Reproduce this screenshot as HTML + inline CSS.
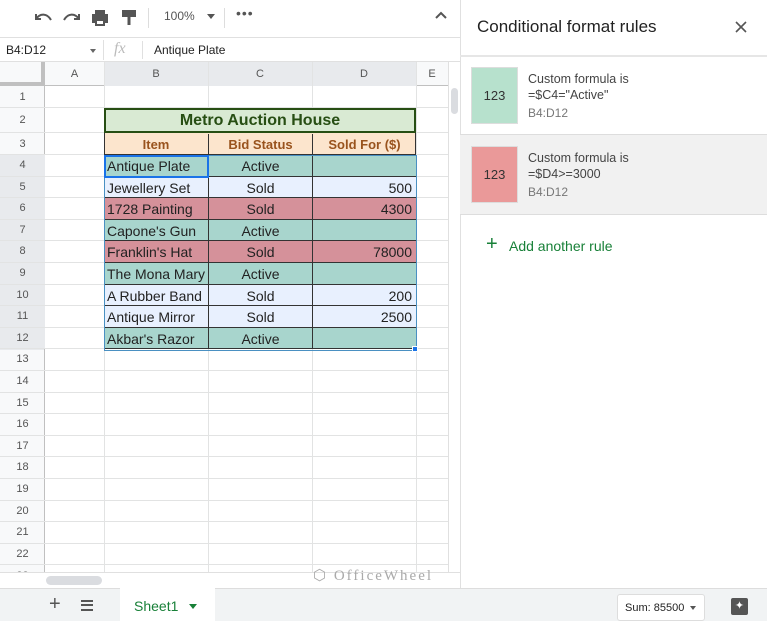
<!DOCTYPE html><html><head><meta charset="utf-8"><style>
*{margin:0;padding:0;box-sizing:border-box}
body{width:767px;height:621px;position:relative;overflow:hidden;background:#fff;font-family:"Liberation Sans",Arial,sans-serif;color:#222}
.a{position:absolute}
.hl{position:absolute;height:1px;background:#e2e3e3}
.vl{position:absolute;width:1px;background:#e2e3e3}
.rn{position:absolute;left:0;width:45px;text-align:center;font-size:11px;color:#555;background:#f8f9fa}
.c{position:absolute;font-size:14px;line-height:22px;white-space:nowrap;overflow:hidden}
</style></head><body>
<!-- toolbar -->
<div class="a" style="left:0;top:0;width:460px;height:38px;background:#fff;border-bottom:1px solid #e0e0e0"></div>
<svg class="a" style="left:30px;top:6px" width="120" height="24" viewBox="0 0 120 24" fill="none" stroke="#555" stroke-width="2">
<path d="M6 8 L6 13 L11 13"/><path d="M6 13 C10 7 17 7 21 14"/>
<path d="M49 8 L49 13 L44 13"/><path d="M49 13 C45 7 38 7 34 14"/>
<rect x="63" y="9" width="14" height="7" fill="#555"/><rect x="66" y="5" width="8" height="4" fill="#555"/><rect x="66" y="14" width="8" height="5" fill="#fff"/>
<rect x="93" y="5" width="12" height="5" fill="#555"/><path d="M99 10 L99 19" stroke-width="3"/>
</svg>
<div class="a" style="left:148px;top:8px;width:1px;height:20px;background:#ddd"></div>
<div class="a" style="left:164px;top:9px;font-size:12px;color:#555">100%</div>
<div class="a" style="left:207px;top:14px;border:4px solid transparent;border-top:5px solid #555"></div>
<div class="a" style="left:224px;top:8px;width:1px;height:20px;background:#ddd"></div>
<div class="a" style="left:236px;top:5px;font-size:14px;color:#555;letter-spacing:1px">•••</div>
<svg class="a" style="left:434px;top:10px" width="14" height="10"><path d="M2 8 L7 3 L12 8" stroke="#555" stroke-width="2" fill="none"/></svg>
<!-- formula bar -->
<div class="a" style="left:0;top:38px;width:460px;height:24px;border-bottom:1px solid #e0e0e0"></div>
<div class="a" style="left:6px;top:43px;font-size:12px">B4:D12</div>
<div class="a" style="left:90px;top:49px;border:3px solid transparent;border-top:4px solid #666"></div>
<div class="a" style="left:103px;top:40px;width:1px;height:20px;background:#e0e0e0"></div>
<div class="a" style="left:114px;top:40px;font-size:16px;font-style:italic;color:#bbb;font-family:'Liberation Serif',serif">fx</div>
<div class="a" style="left:142px;top:41px;width:1px;height:18px;background:#e0e0e0"></div>
<div class="a" style="left:154px;top:43px;font-size:12px">Antique Plate</div>
<!-- headers -->
<div class="a" style="left:0;top:62px;width:448px;height:24px;background:#f8f9fa;border-bottom:1px solid #c0c0c0"></div>
<div class="a" style="left:104px;top:62px;width:312px;height:24px;background:#e8eaed"></div>
<div class="a" style="left:0;top:62px;width:45px;height:24px;background:#f8f9fa;border-right:4px solid #c0c0c0;border-bottom:4px solid #c0c0c0"></div>
<div class="a" style="left:45px;top:68px;width:59px;text-align:center;font-size:11px;color:#555">A</div>
<div class="a" style="left:104px;top:68px;width:104px;text-align:center;font-size:11px;color:#555">B</div>
<div class="a" style="left:208px;top:68px;width:104px;text-align:center;font-size:11px;color:#555">C</div>
<div class="a" style="left:312px;top:68px;width:104px;text-align:center;font-size:11px;color:#555">D</div>
<div class="a" style="left:416px;top:68px;width:32px;text-align:center;font-size:11px;color:#555">E</div>
<div class="vl" style="left:104px;top:62px;height:510px;background:#e2e3e3"></div>
<div class="vl" style="left:208px;top:62px;height:510px"></div>
<div class="vl" style="left:312px;top:62px;height:510px"></div>
<div class="vl" style="left:416px;top:62px;height:510px"></div>
<div class="a" style="left:0;top:86px;width:45px;height:486px;background:#f8f9fa;border-right:1px solid #c0c0c0"></div>
<div class="a" style="left:0;top:155px;width:45px;height:195px;background:#e8eaed;border-right:1px solid #c0c0c0"></div>
<div id="rows"></div>
<!-- table -->
<div class="a" style="left:104px;top:108px;width:312px;height:25px;background:#d9ead3;border:2px solid #274e13;text-align:center;font-weight:bold;font-size:16px;line-height:21px;color:#274e13">Metro Auction House</div>
<div class="a" style="left:104px;top:133px;width:312px;height:22px;background:#fce5cd;border:1px solid #333;border-top:none"></div>
<div class="c" style="left:104px;top:134px;width:104px;text-align:center;color:#99531d;font-weight:bold;font-size:13px">Item</div>
<div class="c" style="left:208px;top:134px;width:104px;text-align:center;color:#99531d;font-weight:bold;font-size:13px;border-left:1px solid #333">Bid Status</div>
<div class="c" style="left:312px;top:134px;width:104px;text-align:center;color:#99531d;font-weight:bold;font-size:13px;border-left:1px solid #333">Sold For ($)</div>
<div id="data"></div>
<div class="a" style="left:104px;top:155px;width:313px;height:196px;border:1px solid #4a90c2"></div>
<div class="a" style="left:104px;top:155px;width:105px;height:23px;border:2px solid #1a73e8"></div>
<div class="a" style="left:412px;top:346px;width:6px;height:6px;background:#1a73e8;border:1px solid #fff"></div>
<!-- scrollbars -->
<div class="a" style="left:448px;top:62px;width:12px;height:510px;background:#fff;border-left:1px solid #e0e0e0"></div>
<div class="a" style="left:451px;top:88px;width:7px;height:26px;background:#dadce0;border-radius:4px"></div>
<div class="a" style="left:0;top:572px;width:460px;height:16px;background:#fff;border-top:1px solid #e0e0e0"></div>
<div class="a" style="left:46px;top:576px;width:56px;height:9px;background:#dadce0;border-radius:5px"></div>
<div class="a" style="left:313px;top:566px;font-size:15px;color:#aaa;font-family:'Liberation Serif',serif;letter-spacing:2px">⬡ OfficeWheel</div>
<!-- panel -->
<div class="a" style="left:460px;top:0;width:307px;height:588px;background:#fff;border-left:1px solid #e0e0e0"></div>
<div class="a" style="left:477px;top:17px;font-size:17px;color:#222">Conditional format rules</div>
<svg class="a" style="left:734px;top:20px" width="14" height="14"><path d="M2 2 L12 12 M12 2 L2 12" stroke="#555" stroke-width="1.6"/></svg>
<div class="a" style="left:460px;top:55px;width:307px;height:2px;background:#e6e6e6"></div>
<div class="a" style="left:471px;top:67px;width:47px;height:57px;background:#b7e1cd;border:1px solid #ddd;text-align:center;line-height:55px;font-size:13px;color:#333">123</div>
<div class="a" style="left:528px;top:71px;font-size:12.5px;color:#444;line-height:16px">Custom formula is<br>=$C4="Active"</div>
<div class="a" style="left:528px;top:106px;font-size:12px;color:#777">B4:D12</div>
<div class="a" style="left:460px;top:134px;width:307px;height:81px;background:#f1f1f1;border-top:1px solid #ddd;border-bottom:1px solid #ddd"></div>
<div class="a" style="left:471px;top:146px;width:47px;height:57px;background:#ea9999;border:1px solid #ddd;text-align:center;line-height:55px;font-size:13px;color:#333">123</div>
<div class="a" style="left:528px;top:150px;font-size:12.5px;color:#444;line-height:16px">Custom formula is<br>=$D4&gt;=3000</div>
<div class="a" style="left:528px;top:185px;font-size:12px;color:#777">B4:D12</div>
<div class="a" style="left:486px;top:234px;font-size:20px;color:#188038;line-height:20px">+</div>
<div class="a" style="left:509px;top:238px;font-size:14px;color:#188038">Add another rule</div>
<!-- bottom -->
<div class="a" style="left:0;top:588px;width:767px;height:33px;background:#f1f3f4;border-top:1px solid #ddd"></div>
<div class="a" style="left:49px;top:593px;font-size:20px;color:#555">+</div>
<div class="a" style="left:81px;top:600px;width:12px;height:11px;border-top:2px solid #555;border-bottom:2px solid #555"><div style="margin-top:2px;height:3px;border-top:2px solid #555"></div></div>
<div class="a" style="left:120px;top:588px;width:95px;height:33px;background:#fff"></div>
<div class="a" style="left:134px;top:598px;font-size:14px;color:#188038">Sheet1</div>
<div class="a" style="left:189px;top:604px;border:4px solid transparent;border-top:5px solid #188038"></div>
<div class="a" style="left:617px;top:594px;width:88px;height:27px;background:#fff;border:1px solid #ddd;border-radius:3px;font-size:11px;line-height:26px;padding-left:7px">Sum: 85500</div>
<div class="a" style="left:690px;top:606px;border:3px solid transparent;border-top:4px solid #555"></div>
<div class="a" style="left:731px;top:598px;width:17px;height:17px;background:#555;border-radius:2px;color:#fff;font-size:11px;text-align:center;line-height:17px">✦</div>
<script>
var tops=[86,108,133,155];for(var i=4;i<23;i++)tops.push(155+(i-3)*21.6);
var h='';for(var i=0;i<23;i++){var t=tops[i],n=(i<22?tops[i+1]:588)-t;
h+='<div class="rn" style="top:'+t+'px;height:'+n+'px;line-height:'+n+'px;background:'+(i>=3&&i<=11?'#e8eaed':'transparent')+'">'+(i+1)+'</div>';
h+='<div class="hl" style="left:0;width:448px;top:'+(t+n-1)+'px"></div>';}
document.getElementById('rows').innerHTML=h;
var d=[["Antique Plate","Active","",0],["Jewellery Set","Sold","500",1],["1728 Painting","Sold","4300",2],["Capone's Gun","Active","",0],["Franklin's Hat","Sold","78000",2],["The Mona Mary","Active","",0],["A Rubber Band","Sold","200",1],["Antique Mirror","Sold","2500",1],["Akbar's Razor","Active","",0]];
var bg=['#a8d5cd','#e8f0fe','#d5919a'];h='';
for(var i=0;i<9;i++){var t=155+i*21.6,r=d[i];
h+='<div class="a" style="left:104px;top:'+t+'px;width:312px;height:21.6px;background:'+bg[r[3]]+';border-bottom:1px solid #333"></div>';
h+='<div class="c" style="left:107px;top:'+t+'px;width:100px">'+r[0]+'</div>';
h+='<div class="c" style="left:208px;top:'+t+'px;width:104px;text-align:center;border-left:1px solid #333;height:21.6px">'+r[1]+'</div>';
h+='<div class="c" style="left:312px;top:'+t+'px;width:104px;text-align:right;padding-right:4px;border-left:1px solid #333;height:21.6px">'+r[2]+'</div>';}
document.getElementById('data').innerHTML=h;
</script>
</body></html>
